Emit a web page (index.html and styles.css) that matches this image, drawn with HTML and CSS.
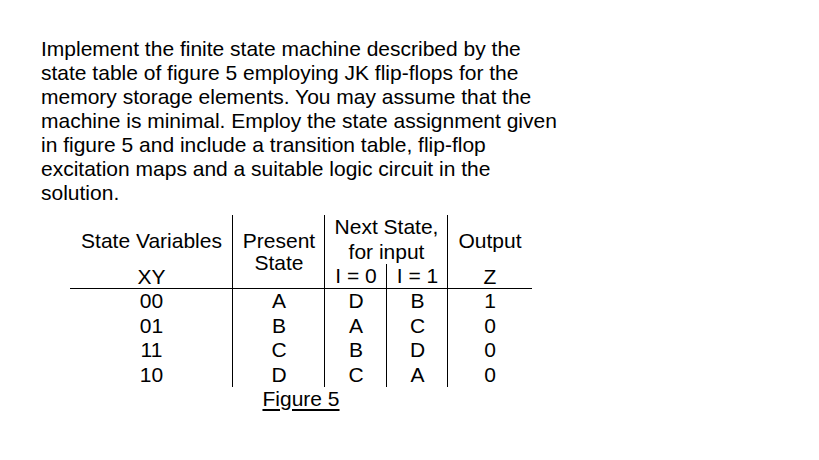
FILE: index.html
```html
<!DOCTYPE html>
<html>
<head>
<meta charset="utf-8">
<link rel="stylesheet" href="styles.css">
</head>
<body>
<div class="page">
  <p class="question">Implement the finite state machine described by the<br>state table of figure 5 employing JK flip-flops for the<br>memory storage elements. You may assume that the<br>machine is minimal. Employ the state assignment given<br>in figure 5 and include a transition table, flip-flop<br>excitation maps and a suitable logic circuit in the<br>solution.</p>
  <div class="figure">
    <div class="table">
      <div class="head c1">
        <div class="line24">State Variables</div>
        <div class="line24 low">XY</div>
      </div>
      <div class="head c2 bl">
        <div class="line22">Present</div>
        <div class="line22">State</div>
      </div>
      <div class="head next bl">
        <div class="line245">Next State,</div>
        <div class="line245">for input</div>
        <div class="sub">
          <div class="line24">I = 0</div>
          <div class="line24 bl">I = 1</div>
        </div>
      </div>
      <div class="head c5 bl">
        <div class="line24">Output</div>
        <div class="line24 low">Z</div>
      </div>

      <div class="cell">00</div><div class="cell bl">A</div><div class="cell bl">D</div><div class="cell bl">B</div><div class="cell bl">1</div>
      <div class="cell">01</div><div class="cell bl">B</div><div class="cell bl">A</div><div class="cell bl">C</div><div class="cell bl">0</div>
      <div class="cell">11</div><div class="cell bl">C</div><div class="cell bl">B</div><div class="cell bl">D</div><div class="cell bl">0</div>
      <div class="cell">10</div><div class="cell bl">D</div><div class="cell bl">C</div><div class="cell bl">A</div><div class="cell bl">0</div>
    </div>
    <div class="caption"><span class="u">Figure 5</span></div>
  </div>
</div>
</body>
</html>
```
FILE: styles.css
```css
html, body {
  margin: 0;
  padding: 0;
  background: #fff;
}
body {
  font-family: "Liberation Sans", Arial, sans-serif;
  color: #000;
  font-size: 21px;
}
.page {
  padding: 37px 0 0 41px;
}
.question {
  margin: 0;
  line-height: 24px;
  white-space: nowrap;
}
.figure {
  margin: 10px 0 0 29px;
  width: 462px;
}
.table {
  display: grid;
  grid-template-columns: 163px 92px 62px 61px 84px;
}
.head {
  box-sizing: border-box;
  height: 74px;
  border-bottom: 1px solid #000;
  text-align: center;
}
.c1, .c5 {
  padding-top: 14px;
}
.c2 {
  padding-top: 15px;
}
.next {
  grid-column: span 2;
}
.line24 { line-height: 24px; }
.line22 { line-height: 22px; }
.line245 { line-height: 24.5px; }
.low { margin-top: 12px; }
.sub {
  display: grid;
  grid-template-columns: 62px 61px;
  margin-top: 0;
}
.bl {
  border-left: 1px solid #000;
  margin-left: -1px;
}
.sub .bl {
  margin-left: -1px;
}
.cell {
  text-align: center;
  line-height: 24.5px;
}
.caption {
  text-align: center;
  line-height: 24px;
}
.u {
  text-decoration: underline;
  text-underline-offset: 3px;
}
```
